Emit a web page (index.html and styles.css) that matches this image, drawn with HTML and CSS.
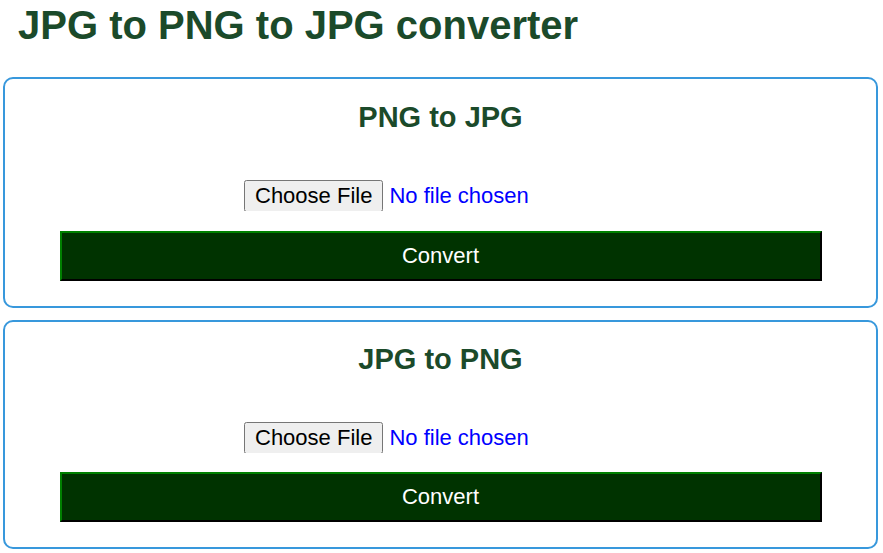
FILE: index.html
```html
<!DOCTYPE html>
<html lang="en">
<head>
<meta charset="utf-8">
<title>JPG to PNG to JPG converter</title>
<link rel="stylesheet" href="styles.css">
</head>
<body>
<h1 class="title">JPG to PNG to JPG converter</h1>
<section class="card">
  <h2 class="card-title">PNG to JPG</h2>
  <div class="file-row"><input class="file-input" type="file" accept="image/png"></div>
  <button class="convert" type="button">Convert</button>
</section>
<section class="card">
  <h2 class="card-title">JPG to PNG</h2>
  <div class="file-row"><input class="file-input" type="file" accept="image/jpeg"></div>
  <button class="convert" type="button">Convert</button>
</section>
</body>
</html>
```
FILE: styles.css
```css
html, body {
  margin: 0;
  padding: 0;
  background: #ffffff;
}
body {
  font-family: "Liberation Sans", Arial, sans-serif;
  font-size: 22px;
  color: #000;
}
.title {
  margin: 0;
  padding: 2px 0 0 18px;
  font-size: 40px;
  line-height: 46px;
  font-weight: bold;
  color: #1b4a2a;
}
.card {
  margin: 29px 5px 0 3px;
  border: 2px solid #3898dc;
  border-radius: 10px;
  padding: 21px 0 25px;
  text-align: center;
}
.card + .card {
  margin-top: 12px;
  padding-top: 20px;
}
.card + .card .convert {
  margin-top: 19px;
}
.card-title {
  margin: 0;
  font-size: 29px;
  line-height: 34px;
  font-weight: bold;
  color: #1b4a2a;
}
.file-row {
  display: flex;
  justify-content: flex-start;
  margin-top: 46px;
  padding-left: 239px;
  height: 31px;
}
.file-input {
  font-family: "Liberation Sans", Arial, sans-serif;
  font-size: 22px;
  color: #0000ff;
  margin: 0;
}
.file-input::file-selector-button {
  font-family: "Liberation Sans", Arial, sans-serif;
  font-size: 22px;
  color: #000;
  padding: 1px 9px;
  margin-right: 6px;
}
.convert {
  display: block;
  box-sizing: border-box;
  width: 762px;
  height: 50px;
  margin: 20px auto 0;
  padding: 0;
  background: #003300;
  color: #ffffff;
  font-family: "Liberation Sans", Arial, sans-serif;
  font-size: 22px;
  border-style: solid;
  border-width: 2px;
  border-color: #008000 #000000 #000000 #008000;
}
```
